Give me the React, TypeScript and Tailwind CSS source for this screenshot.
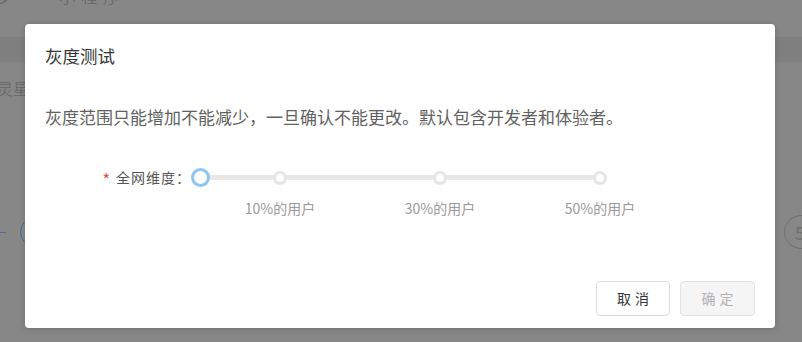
import React from "react";

const font = { fontFamily: '"Noto Sans CJK SC", "Noto Sans", sans-serif' };

function Slider() {
  const stops = [
    { x: 9, label: null, active: true },
    { x: 89, label: "10%的用户" },
    { x: 249, label: "30%的用户" },
    { x: 409, label: "50%的用户" },
  ];
  return (
    <div className="relative w-[418px] h-[60px]">
      <div className="absolute left-[9px] right-[9px] top-[7px] h-[5px] rounded-full bg-[#e8e8e8]" />
      {stops.map((s, i) =>
        s.active ? (
          <div
            key={i}
            className="absolute top-0 w-[19px] h-[19px] rounded-full border-[3px] border-[#8ec6f1] bg-white"
            style={{ left: s.x - 9.5 }}
          />
        ) : (
          <div
            key={i}
            className="absolute top-[2.5px] w-[14px] h-[14px] rounded-full border-[3px] border-[#e6e6e6] bg-white"
            style={{ left: s.x - 7 }}
          />
        )
      )}
      {stops.map((s, i) =>
        s.label ? (
          <div
            key={"l" + i}
            className="absolute top-[30px] w-[100px] text-center text-[14px] leading-[20px] text-[#9a9a9a]"
            style={{ left: s.x - 50 }}
          >
            {s.label}
          </div>
        ) : null
      )}
    </div>
  );
}

export default function App() {
  return (
    <div
      className="relative w-[802px] h-[342px] overflow-hidden bg-[#878787]"
      style={font}
    >
      {/* background page (under overlay) */}
      <div className="flex flex-col">
        <div className="h-[37px] relative">
          <div className="absolute -top-[13px] left-[-4px] text-[16px] leading-[18px] text-[#6a6a6a] whitespace-nowrap tracking-[6px]">
            步 　 小程序
          </div>
        </div>
        <div className="h-[25px] bg-[#7f7f7f]" />
        <div className="h-[18px]" />
        <div className="text-[16px] leading-[16px] text-[#6b6b6b] ml-[-3px] whitespace-nowrap">
          灵星运营
        </div>
        <div className="h-[120px]" />
        <div className="flex items-center h-[32px] justify-between">
          <div className="flex items-center">
            <div className="w-[6px] h-[1px] bg-[#4e6e8e]" />
            <div className="ml-[14px] w-[30px] h-[30px] rounded-full border border-[#4e6e8e]" />
          </div>
          <div className="mr-[-16px] w-[34px] h-[34px] rounded-full border border-[#6f6f6f] flex items-center pl-[10px] text-[18px] text-[#6f6f6f]">
            5
          </div>
        </div>
      </div>

      {/* dialog */}
      <div className="absolute left-[25px] top-[24px] w-[750px] h-[304px] rounded-[4px] bg-white shadow-[0_1px_6px_rgba(0,0,0,0.18)] flex flex-col px-[20px] pb-[12px]">
        <div className="h-[64px] flex items-center text-[17.5px] text-[#353535]">
          灰度测试
        </div>
        <div className="mt-[17px] text-[17px] leading-[24px] text-[#616161] whitespace-nowrap">
          灰度范围只能增加不能减少，一旦确认不能更改。默认包含开发者和体验者。
        </div>
        <div className="mt-[39px] flex items-start">
          <div className="w-[146px] flex justify-end items-center h-[19px] text-[14px] text-[#555]">
            <span className="text-[#e64340] mr-[6px] text-[16px] leading-[19px] pt-[3px]">*</span>
            <span className="tracking-[1px]">全网维度：</span>
          </div>
          <Slider />
        </div>
        <div className="mt-auto flex justify-end gap-[10px]">
          <button className="w-[74px] h-[35px] rounded-[4px] border border-[#dcdcdc] bg-white text-[14px] text-[#353535] tracking-[4px] pl-[4px]">
            取消
          </button>
          <button className="w-[75px] h-[35px] rounded-[4px] border border-[#e2e2e2] bg-[#f5f5f5] text-[14px] text-[#b2b2b2] tracking-[4px] pl-[4px]">
            确定
          </button>
        </div>
      </div>
    </div>
  );
}
